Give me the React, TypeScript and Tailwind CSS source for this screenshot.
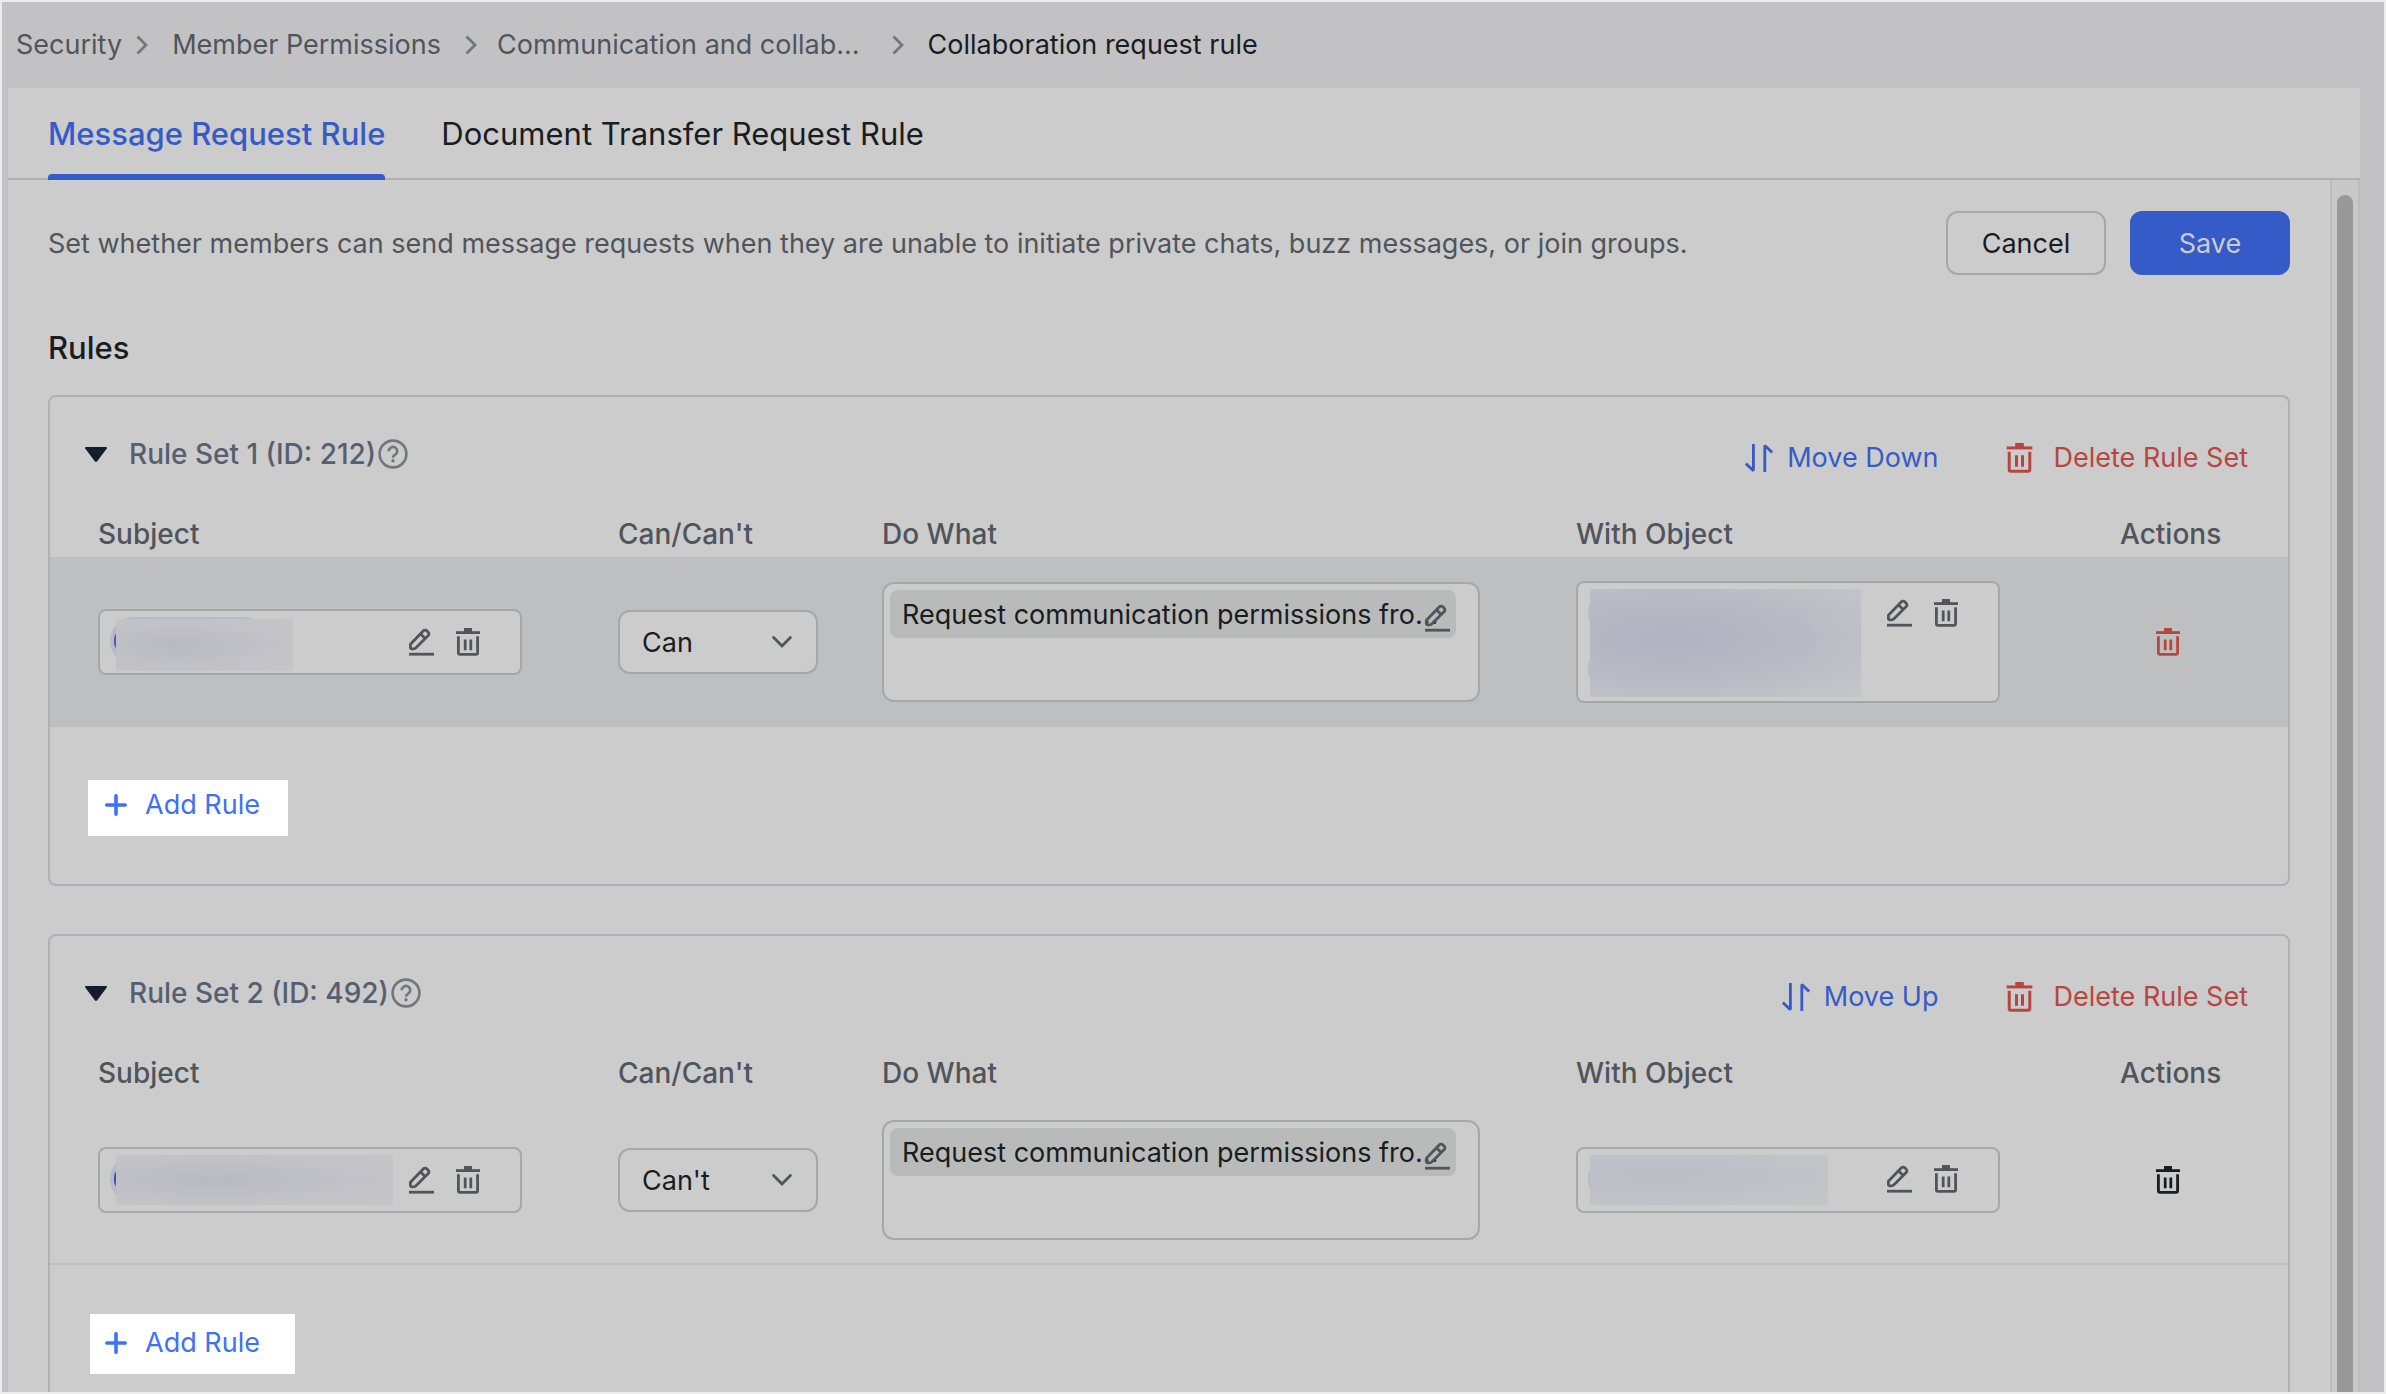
import React, { useState } from 'react';

type IconProps = { className?: string };

function TrashIcon({ className }: IconProps) {
  return (
    <svg viewBox="0 0 24 28" fill="none" stroke="currentColor" strokeWidth="2.8" className={className}>
      <path d="M0 4.6h24" />
      <path d="M8 2h8" strokeWidth="4" />
      <path d="M2.4 8.2v16.6a1.6 1.6 0 0 0 1.6 1.6h16a1.6 1.6 0 0 0 1.6-1.6V8.2" />
      <path d="M9.2 11.4v10.8M14.8 11.4v10.8" />
    </svg>
  );
}

function EditIcon({ className }: IconProps) {
  return (
    <svg viewBox="0 0 25 28" fill="none" stroke="currentColor" strokeWidth="2.8" strokeLinejoin="round" className={className}>
      <path d="M1.4 16.2 14.4 2.8a2.4 2.4 0 0 1 3.4 0l1.4 1.4a2.4 2.4 0 0 1 0 3.4L7 19.8a3.4 3.4 0 0 1-2.4 1H2.8a1.4 1.4 0 0 1-1.4-1.4z" />
      <path d="m11.6 6 4.6 4.6" />
      <path d="M0 26.2h25" />
    </svg>
  );
}

function MoveIcon({ className }: IconProps) {
  return (
    <svg viewBox="0 0 28 28" fill="none" stroke="currentColor" strokeWidth="2.8" strokeLinejoin="bevel" className={className}>
      <path d="M8.4 0v26.6L.8 19.6" />
      <path d="M19.8 28V1.4l7.4 7" />
    </svg>
  );
}

function HelpIcon({ className }: IconProps) {
  return (
    <svg viewBox="0 0 30 30" fill="none" stroke="currentColor" strokeWidth="2.6" className={className}>
      <circle cx="15" cy="15" r="13.4" />
      <path d="M10.8 12.2a4.2 4.2 0 1 1 6.4 3.5c-1.4.8-2.2 1.5-2.2 3" />
      <circle cx="15" cy="21.8" r="1.7" fill="currentColor" stroke="none" />
    </svg>
  );
}

function ChevronRight() {
  return (
    <svg viewBox="0 0 12 20" fill="none" stroke="currentColor" strokeWidth="2.8" className="h-5 w-3 shrink-0 text-[#72767d]">
      <path d="m1.5 1.5 8.5 8.5-8.5 8.5" />
    </svg>
  );
}

const crumbs = [
  { label: 'Security', className: 'mr-3.5' },
  { label: 'Member Permissions', className: 'mx-6' },
  { label: 'Communication and collab...', className: 'ml-5 mr-8' },
];

const ruleSets = [
  {
    index: 1,
    id: 212,
    move: 'Move Down',
    value: 'Can',
    rowClass: 'h-[170px] bg-[#bebfc1]',
    subjectChip: 'w-[157px]',
    subjectMask: 'mt-1.5 h-[52px] w-[177px]',
    avatar: 'bg-[#6a4bb5]',
    objectBox: 'h-[122px]',
    objectChips: ['top-1.5', 'top-[62px]'],
    objectMask: 'h-[108px] w-[271px] from-[#b0b2c1] via-[#b8bbc4]',
    trash: 'text-[#b8453f]',
    highlight: 'ml-[38px] h-14 w-[200px] pb-1.5 pl-[17px]',
    addTop: 'pt-[53px]',
  },
  {
    index: 2,
    id: 492,
    move: 'Move Up',
    value: "Can't",
    rowClass: 'h-[168px] border-b-2 border-[#bebfc1]',
    subjectChip: 'w-[240px]',
    subjectMask: 'h-[50px] w-[277px]',
    avatar: 'bg-[#4a4bb5]',
    objectBox: 'h-[66px]',
    objectChips: ['top-1.5'],
    objectMask: 'h-[50px] w-[238px] from-[#bbbcc4] via-[#c0c1c8]',
    trash: 'text-[#191c21]',
    highlight: 'ml-10 h-[60px] w-[205px] pb-[3px] pl-[15px]',
    addTop: 'pt-[49px]',
  },
];

type RuleSet = (typeof ruleSets)[number];

function RuleSetCard({ set }: { set: RuleSet }) {
  const [value, setValue] = useState(set.value);

  return (
    <section className="h-[491px] shrink-0 rounded-lg border-2 border-[#b0b1b6]">
      <div className="flex h-[120px] items-center justify-between pl-[35px] pr-10">
        <div className="flex items-center pb-1.5 text-[28px] font-medium text-[#565f70]">
          <button aria-label="Collapse" className="mr-[22px]">
            <svg viewBox="0 0 22 15" className="h-[15px] w-[22px] fill-[#151d2c]">
              <path d="M1 0h20a1 1 0 0 1 .8 1.6l-9.6 12.6a1.5 1.5 0 0 1-2.4 0L.2 1.6A1 1 0 0 1 1 0z" />
            </svg>
          </button>
          <h3>Rule Set {set.index} (ID: {set.id})</h3>
          <button aria-label="Help" className="ml-0.5">
            <HelpIcon className="h-[30px] w-[30px] text-[#72767d]" />
          </button>
        </div>
        <div className="flex items-center gap-[68px] pt-0.5">
          <button className="flex items-center gap-3.5 text-[#355bc8]">
            <MoveIcon className="h-7 w-7" />
            <span>{set.move}</span>
          </button>
          <button className="flex items-center gap-5 text-[#b8453f]">
            <TrashIcon className="h-[30px] w-[27px]" />
            <span>Delete Rule Set</span>
          </button>
        </div>
      </div>

      <table className="w-full table-fixed text-left">
        <thead>
          <tr className="h-10 align-top text-[28px] leading-[34px] text-[#50555c]">
            <th className="w-[568px] pl-12 font-medium">Subject</th>
            <th className="w-[264px] font-medium">Can/Can't</th>
            <th className="font-medium">Do What</th>
            <th className="w-[544px] font-medium">With Object</th>
            <th className="w-[168px] font-medium">Actions</th>
          </tr>
        </thead>
        <tbody>
          <tr className={set.rowClass}>
            <td className="pl-12">
              <div className="relative flex h-[66px] w-[424px] items-center rounded-lg border-2 border-[#a6a7a9] bg-[#cccccc] pl-4 pr-10">
                <div className={`absolute left-2.5 top-1.5 flex h-12 items-center rounded-full bg-[#b4bacb] pl-1 ${set.subjectChip}`}>
                  <div className={`h-5 w-4 rounded-full ${set.avatar}`} />
                </div>
                <div className={`relative bg-radial-[at_35%_50%] from-[#b9bac2] via-[#c0c0c6] to-[#c6c6c9] ${set.subjectMask}`} />
                <div className="ml-auto flex items-center gap-[22px] text-[#50555c]">
                  <button aria-label="Edit subject">
                    <EditIcon className="h-7 w-[25px]" />
                  </button>
                  <button aria-label="Delete subject">
                    <TrashIcon className="h-7 w-6" />
                  </button>
                </div>
              </div>
            </td>
            <td>
              <div className="relative w-[200px]">
                <select
                  aria-label="Can or can't"
                  value={value}
                  onChange={(e) => setValue(e.target.value)}
                  className="h-16 w-full appearance-none rounded-xl border-2 border-[#a6a7a9] bg-[#cccccc] pl-[22px] pt-0.5 text-[#191c21]"
                >
                  <option>Can</option>
                  <option>Can't</option>
                </select>
                <svg viewBox="0 0 20 12" fill="none" stroke="currentColor" strokeWidth="2.8" strokeLinecap="round" className="pointer-events-none absolute right-[26px] top-[26px] h-3 w-5 text-[#50555c]">
                  <path d="m1.6 1.6 8.4 8.4 8.4-8.4" />
                </svg>
              </div>
            </td>
            <td>
              <div className="h-[120px] w-[598px] rounded-xl border-2 border-[#a6a7a9] bg-[#cccccc] p-1.5">
                <div className="relative flex h-12 w-[566px] items-center rounded-lg bg-[#b9bbba] pl-3 text-[#191c21]">
                  <span className="whitespace-nowrap pt-0.5">Request communication permissions fro...</span>
                  <button aria-label="Edit permission" className="absolute right-1.5 top-3.5 text-[#50555c]">
                    <EditIcon className="h-7 w-[25px]" />
                  </button>
                </div>
              </div>
            </td>
            <td>
              <div className={`relative flex w-[424px] items-start rounded-lg border-2 border-[#a6a7a9] bg-[#cccccc] pl-3 pr-10 pt-1.5 ${set.objectBox}`}>
                {set.objectChips.map((top) => (
                  <div key={top} className={`absolute left-2.5 h-12 w-40 rounded-full bg-[#b4bacb] ${top}`} />
                ))}
                <div className={`relative bg-radial-[at_30%_45%] to-[#c5c6c9] ${set.objectMask}`} />
                <div className="ml-auto mt-2.5 flex items-center gap-[22px] text-[#50555c]">
                  <button aria-label="Edit object">
                    <EditIcon className="h-7 w-[25px]" />
                  </button>
                  <button aria-label="Delete object">
                    <TrashIcon className="h-7 w-6" />
                  </button>
                </div>
              </div>
            </td>
            <td className="pl-9">
              <button aria-label="Delete rule" className={`block ${set.trash}`}>
                <TrashIcon className="h-7 w-6" />
              </button>
            </td>
          </tr>
        </tbody>
      </table>

      <div className={set.addTop}>
        <button className={`flex items-center gap-[18px] bg-white text-[#3f70f8] ${set.highlight}`}>
          <svg viewBox="0 0 22 22" fill="none" stroke="currentColor" strokeWidth="3.6" strokeLinecap="round" className="h-[22px] w-[22px]">
            <path d="M11 1.8v18.4M1.8 11h18.4" />
          </svg>
          <span>Add Rule</span>
        </button>
      </div>
    </section>
  );
}

export default function App() {
  return (
    <div className="flex h-screen flex-col overflow-hidden border-2 border-[#ececed] bg-[#c2c2c4] font-['Inter',sans-serif] text-[27px] leading-9 text-[#191c21]">
      <nav className="flex h-[86px] shrink-0 items-center whitespace-nowrap pl-3.5 text-[#50555c]">
        {crumbs.map((crumb) => (
          <React.Fragment key={crumb.label}>
            <a href="#" className={crumb.className}>{crumb.label}</a>
            <ChevronRight />
          </React.Fragment>
        ))}
        <span className="ml-6 text-[#191c21]">Collaboration request rule</span>
      </nav>

      <main className="ml-1.5 mr-6 flex min-h-0 flex-1 flex-col bg-[#cccccc]">
        <div role="tablist" className="flex h-[92px] shrink-0 gap-14 border-b-2 border-[#b0b0b1] pl-10 text-[31px]">
          <button role="tab" aria-selected="true" className="relative pt-0.5 font-medium text-[#355bc8]">
            Message Request Rule
            <span className="absolute inset-x-0 -bottom-0.5 h-1.5 rounded-t bg-[#355bc8]" />
          </button>
          <button role="tab" aria-selected="false" className="pt-0.5">Document Transfer Request Rule</button>
        </div>

        <div className="flex min-h-0 flex-1">
          <div className="flex min-w-0 flex-1 flex-col overflow-hidden px-10 pt-[31px]">
            <div className="flex shrink-0 items-center justify-between">
              <p className="pt-0.5 text-[#50555c]">
                Set whether members can send message requests when they are unable to initiate private chats, buzz messages, or join groups.
              </p>
              <div className="flex gap-6">
                <button className="h-16 w-40 rounded-xl border-2 border-[#a6a7a9] pt-0.5">Cancel</button>
                <button className="h-16 w-40 rounded-xl bg-[#355bc8] pt-0.5 text-[#cccccc]">Save</button>
              </div>
            </div>
            <h2 className="mb-[29px] mt-[55px] shrink-0 text-[31px] font-medium">Rules</h2>
            <div className="flex flex-col gap-12">
              {ruleSets.map((set) => (
                <RuleSetCard key={set.id} set={set} />
              ))}
            </div>
          </div>

          {/* Scrollbar */}
          <div className="flex w-[30px] shrink-0 justify-center border-x-2 border-[#bcbcbe] bg-[#c8c8c8] pt-[15px]">
            <div className="w-4 rounded-t-full bg-[#999999]" />
          </div>
        </div>
      </main>
    </div>
  );
}
